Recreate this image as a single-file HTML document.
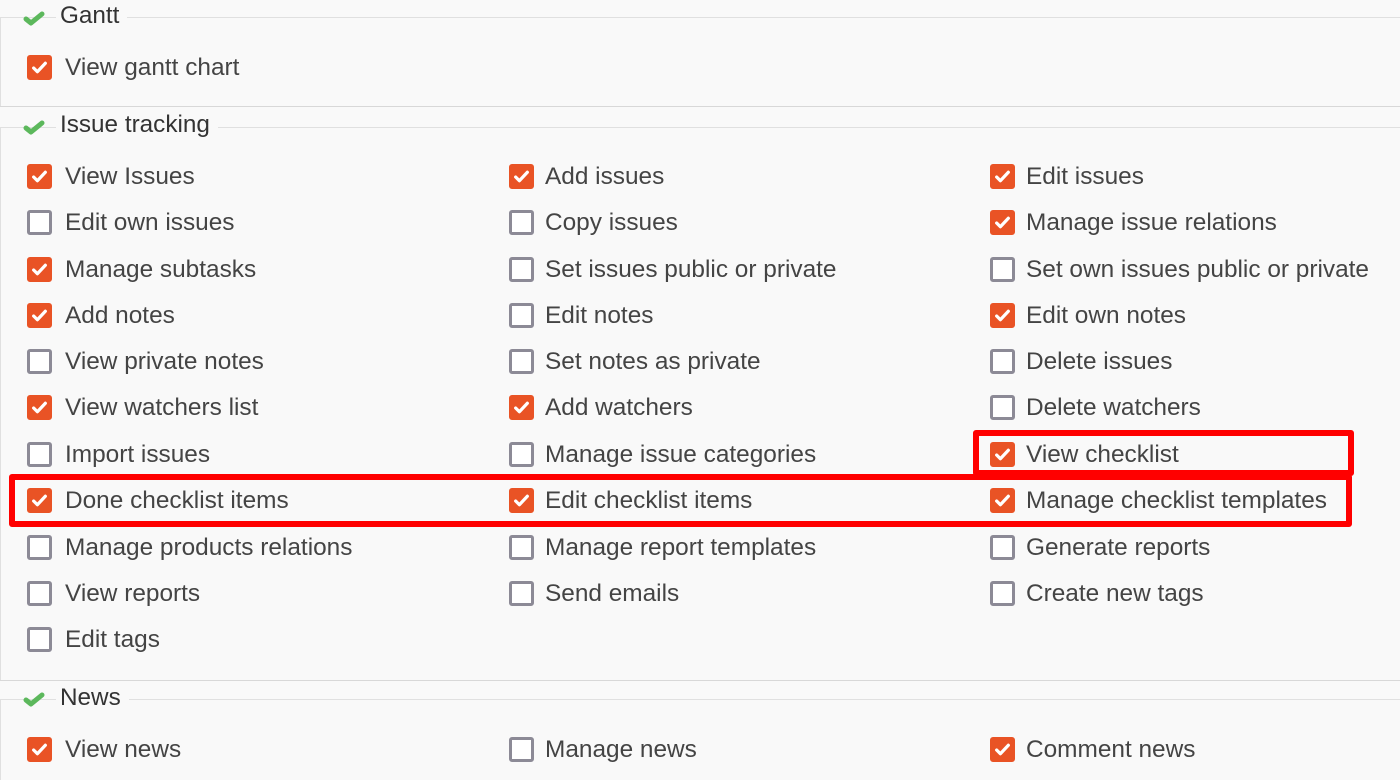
<!DOCTYPE html>
<html><head><meta charset="utf-8"><style>
body{margin:0;width:1400px;height:780px;background:#f9f9f9;position:relative;overflow:hidden;font-family:"Liberation Sans",sans-serif;}
.hl{position:absolute;height:1px;background:#e0e0e0}
.vl{position:absolute;width:1px;background:#e0e0e0}
.lg{position:absolute;font-size:24.3px;color:#333;line-height:28px;background:#f9f9f9;padding:0 8px 0 4px}
.gk{position:absolute;width:22px;height:16px}
.cb{position:absolute;width:19px;height:19px;border:3px solid #8c8a96;border-radius:3px;background:#fff}
.cb.c{background:#e95325;border-color:#e95325}
.cb.c svg{position:absolute;left:1px;top:2px}
.t{position:absolute;font-size:24.4px;color:#444;line-height:28px;white-space:nowrap}
.rb{position:absolute;border:6px solid #f00;border-radius:3px}
</style></head><body>
<div class="hl" style="left:0;top:17px;width:1400px"></div>
<div class="vl" style="left:0;top:17px;height:90px"></div>
<div class="hl" style="left:0;top:106px;width:1400px;background:#d8d8d8"></div>
<div class="lg" style="left:56px;top:2px">Gantt</div>
<div class="hl" style="left:0;top:127px;width:1400px"></div>
<div class="vl" style="left:0;top:127px;height:553px"></div>
<div class="hl" style="left:0;top:680px;width:1400px;background:#d8d8d8"></div>
<div class="lg" style="left:56px;top:111px">Issue tracking</div>
<div class="hl" style="left:0;top:699px;width:1400px"></div>
<div class="vl" style="left:0;top:699px;height:81px"></div>
<div class="lg" style="left:56px;top:684px">News</div>

<svg class="gk" style="left:23px;top:10px" viewBox="0 0 22 16"><path d="M3 9 L8 13 L19 4" stroke="#5cb85c" stroke-width="5" fill="none" stroke-linecap="round" stroke-linejoin="round"/></svg>
<svg class="gk" style="left:23px;top:119px" viewBox="0 0 22 16"><path d="M3 9 L8 13 L19 4" stroke="#5cb85c" stroke-width="5" fill="none" stroke-linecap="round" stroke-linejoin="round"/></svg>
<svg class="gk" style="left:23px;top:691px" viewBox="0 0 22 16"><path d="M3 9 L8 13 L19 4" stroke="#5cb85c" stroke-width="5" fill="none" stroke-linecap="round" stroke-linejoin="round"/></svg>

<div id="items"></div>
<script>
var X=[27,509,990],O=[38,36,36];
var rows=[
[67,[["View gantt chart",1]]],
[176,[["View Issues",1],["Add issues",1],["Edit issues",1]]],
[222,[["Edit own issues",0],["Copy issues",0],["Manage issue relations",1]]],
[269,[["Manage subtasks",1],["Set issues public or private",0],["Set own issues public or private",0]]],
[315,[["Add notes",1],["Edit notes",0],["Edit own notes",1]]],
[361,[["View private notes",0],["Set notes as private",0],["Delete issues",0]]],
[407,[["View watchers list",1],["Add watchers",1],["Delete watchers",0]]],
[454,[["Import issues",0],["Manage issue categories",0],["View checklist",1]]],
[500,[["Done checklist items",1],["Edit checklist items",1],["Manage checklist templates",1]]],
[547,[["Manage products relations",0],["Manage report templates",0],["Generate reports",0]]],
[593,[["View reports",0],["Send emails",0],["Create new tags",0]]],
[639,[["Edit tags",0]]],
[749,[["View news",1],["Manage news",0],["Comment news",1]]]
];
var h="";
rows.forEach(function(r){r[1].forEach(function(it,i){
var x=X[i],y=r[0];
h+='<div class="cb'+(it[1]?' c':'')+'" style="left:'+x+'px;top:'+(y-12)+'px">'+(it[1]?'<svg width="17" height="15" viewBox="0 0 16 14"><path d="M2.5 7.5 L6 11 L13.5 3" stroke="#fff" stroke-width="3" fill="none" stroke-linecap="round" stroke-linejoin="round"/></svg>':'')+'</div>';
h+='<div class="t" style="left:'+(x+O[i])+'px;top:'+(y-13)+'px">'+it[0]+'</div>';
});});
document.getElementById('items').innerHTML=h;
</script>
<div class="rb" style="left:973px;top:430px;width:369px;height:34px"></div>
<div class="rb" style="left:9px;top:474px;width:1331px;height:41px"></div>
</body></html>
